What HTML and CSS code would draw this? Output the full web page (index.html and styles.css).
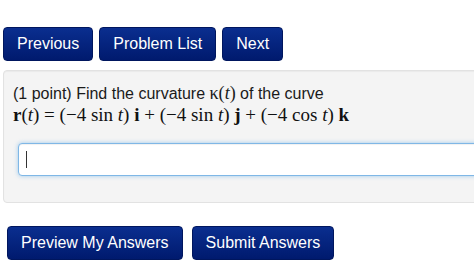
FILE: index.html
```html
<!DOCTYPE html>
<html>
<head>
<meta charset="utf-8">
<link rel="stylesheet" href="styles.css">
</head>
<body>
<div class="page">
  <nav class="nav">
    <button class="btn">Previous</button>
    <button class="btn">Problem List</button>
    <button class="btn">Next</button>
  </nav>
  <div class="well">
    <p class="q">(1 point) Find the curvature <span class="m">κ(<i>t</i>)</span> of the curve</p>
    <p class="math"><b>r</b>(<i>t</i>) = (−4 sin <i>t</i>) <b>i</b> + (−4 sin <i>t</i>) <b>j</b> + (−4 cos <i>t</i>) <b>k</b></p>
    <div class="answer"><span class="caret"></span></div>
  </div>
  <div class="actions">
    <button class="btn">Preview My Answers</button>
    <button class="btn">Submit Answers</button>
  </div>
</div>
</body>
</html>
```
FILE: styles.css
```css
html, body {
  margin: 0;
  padding: 0;
  background: #ffffff;
  overflow: hidden;
}
.page {
  padding: 27px 0 0 3px;
  font-family: "Liberation Sans", Arial, sans-serif;
}
.nav {
  display: flex;
  gap: 6px;
}
.btn {
  font-family: "Liberation Sans", Arial, sans-serif;
  font-size: 16px;
  color: #ffffff;
  background: linear-gradient(#0a2e8f, #001a6e);
  border: 1px solid #00165e;
  border-radius: 4px;
  height: 34px;
  padding: 0 13px;
  line-height: 32px;
  box-sizing: border-box;
}
.well {
  margin-top: 9px;
  width: 520px;
  height: 133px;
  box-sizing: border-box;
  background: #f4f4f4;
  border: 1px solid #e2e2e2;
  border-radius: 4px;
  padding: 13px 9px 0 9px;
  box-shadow: inset 0 1px 1px rgba(0,0,0,0.04);
}
.q {
  margin: 0;
  font-size: 16px;
  line-height: 18px;
  color: #1a1a1a;
}
.m {
  font-family: "Liberation Serif", "Times New Roman", serif;
  font-size: 18px;
}
.math {
  margin: 1px 0 0 0;
  font-family: "Liberation Serif", "Times New Roman", serif;
  font-size: 19px;
  line-height: 22px;
  color: #111;
}
.math b {
  font-weight: bold;
}
.answer {
  margin: 17px 0 0 5px;
  height: 33px;
  box-sizing: border-box;
  background: #ffffff;
  border: 1px solid #7fb7e6;
  border-radius: 4px;
  box-shadow: 0 0 4px rgba(102, 175, 233, 0.6), inset 0 1px 1px rgba(0,0,0,0.06);
  display: flex;
  align-items: center;
  padding-left: 7px;
}
.caret {
  width: 1px;
  height: 17px;
  background: #333;
}
.actions {
  display: flex;
  gap: 9px;
  padding: 23px 0 0 4px;
}
```
